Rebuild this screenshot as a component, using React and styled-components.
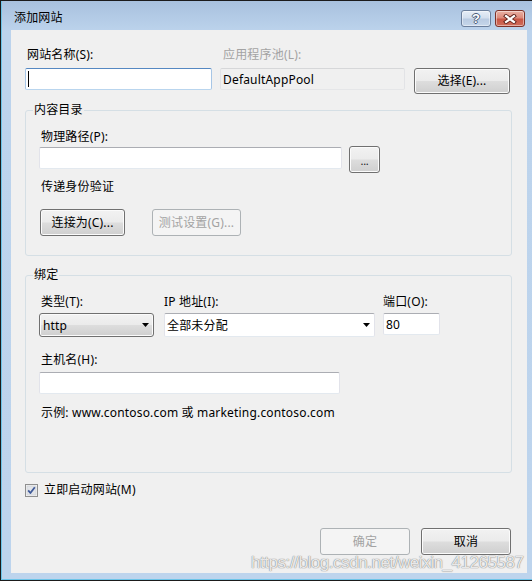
import React from "react";
import styled, { createGlobalStyle } from "styled-components";

const GlobalStyle = createGlobalStyle`
  html, body { margin: 0; padding: 0; background: #000; }
  body {
    font-family: "Noto Sans", "Noto Sans CJK SC", sans-serif;
    font-size: 12px;
    letter-spacing: 0.18px;
    color: #000;
  }
  * { box-sizing: border-box; }
`;

const Window = styled.div`
  position: relative;
  width: 532px;
  height: 581px;
  overflow: hidden;
  display: flex;
  flex-direction: column;
  border-top: 1px solid #1b1b1b;
  border-left: 1px solid #1b1b1b;
  border-bottom: 1px solid #1b1b1b;
  background: linear-gradient(#a8c1de 0px, #bcd3ec 30px, #bdd4ed 100%);
  box-shadow: inset 1px 0 0 #6cc4e8, inset 0 -1px 0 #6cc4e8;
`;

const TitleBar = styled.div`
  height: 29px;
  flex: none;
  display: flex;
  align-items: flex-start;
  padding: 9px 7px 0 13px;
`;

const Title = styled.div`
  line-height: 16px;
  flex: 1;
`;

const CaptionButton = styled.div`
  width: 30px;
  height: 17px;
  margin-left: ${(p) => p.$gap ?? 0}px;
  display: flex;
  align-items: center;
  justify-content: center;
  border-radius: 3px;
  border: 1px solid ${(p) => (p.$close ? "#7d3229" : "#6b7f9c")};
  background: ${(p) =>
    p.$close
      ? "linear-gradient(#eab1a4 0%, #dc8a7b 45%, #c95645 55%, #cf6e5c 100%)"
      : "linear-gradient(#e6eef7 0%, #d3dfee 45%, #b9cbe2 55%, #c6d7ea 100%)"};
  box-shadow: inset 0 0 0 1px rgba(255, 255, 255, 0.45);
`;

const HelpGlyph = styled.span`
  font-family: "Liberation Sans", sans-serif;
  font-weight: bold;
  font-size: 13px;
  line-height: 13px;
  color: #fff;
  text-shadow: 1px 0 0 #4a5c78, -1px 0 0 #4a5c78, 0 1px 0 #4a5c78,
    0 -1px 0 #4a5c78;
`;

const Client = styled.div`
  flex: 1;
  margin: 0 5px 7px 10px;
  background: #f0f0f0;
  padding: 17px 15px 0 14px;
  display: flex;
  flex-direction: column;
`;

const Row = styled.div`
  display: flex;
  align-items: flex-start;
  gap: ${(p) => p.$gap ?? 0}px;
  margin-top: ${(p) => p.$mt ?? 0}px;
  margin-left: ${(p) => p.$ml ?? 0}px;
`;

const Column = styled.div`
  display: flex;
  flex-direction: column;
  width: ${(p) => p.$w}px;
  margin-left: ${(p) => p.$ml ?? 0}px;
`;

const Label = styled.div`
  line-height: 16px;
  white-space: nowrap;
  padding-left: ${(p) => p.$indent ?? 2}px;
  margin-top: ${(p) => p.$mt ?? 0}px;
  margin-bottom: ${(p) => p.$mb ?? 0}px;
  color: ${(p) => (p.$disabled ? "#a3a3a3" : "#000")};
`;

const TextBox = styled.div`
  display: flex;
  align-items: center;
  flex: none;
  width: ${(p) => p.$w}px;
  height: ${(p) => p.$h ?? 22}px;
  margin-top: ${(p) => p.$mt ?? 0}px;
  padding: 0 3px 0 ${(p) => p.$pl ?? 2}px;
  background: ${(p) => (p.$readOnly ? "#f0f0f0" : "#fff")};
  border: 1px solid;
  border-color: ${(p) =>
    p.$focused
      ? "#5588c2 #a7c6e6 #b9d5ee #a7c6e6"
      : p.$readOnly
      ? "#d6d7d9 #e2e3e6 #e5e6e8 #e2e3e6"
      : "#abadb3 #e2e3ea #e3e9ef #e2e3ea"};
  border-radius: 2px;
  white-space: nowrap;
`;

const Caret = styled.span`
  width: 1px;
  height: 16px;
  background: #000;
`;

const Button = styled.button`
  flex: none;
  width: ${(p) => p.$w}px;
  height: ${(p) => p.$h ?? 27}px;
  padding: 0;
  margin: 0;
  font: inherit;
  letter-spacing: inherit;
  color: #000;
  line-height: 16px;
  border: 1px solid #707070;
  border-radius: 3px;
  background: linear-gradient(#f2f2f2 0%, #ebebeb 48%, #dddddd 52%, #cfcfcf 100%);
  box-shadow: inset 0 0 0 1px #fbfbfb;
  &:disabled {
    border-color: #adb2b5;
    background: #f4f4f4;
    color: #a3a3a3;
    box-shadow: none;
  }
`;

const Dots = styled.span`
  display: inline-block;
  font-size: 11px;
  letter-spacing: -0.3px;
  color: #1a1a1a;
  transform: translateY(1px);
`;

const ComboButton = styled.div`
  display: flex;
  align-items: center;
  width: ${(p) => p.$w}px;
  height: 24px;
  padding: 0 4px 0 3px;
  border: 1px solid #707070;
  border-radius: 3px;
  background: linear-gradient(#f2f2f2 0%, #ebebeb 48%, #dddddd 52%, #cfcfcf 100%);
  box-shadow: inset 0 0 0 1px #fbfbfb;
`;

const ComboField = styled.div`
  display: flex;
  align-items: center;
  width: ${(p) => p.$w}px;
  height: 24px;
  padding: 0 4px 0 2px;
  background: #fff;
  border: 1px solid;
  border-color: #abadb3 #e2e3ea #e3e9ef #e2e3ea;
  border-radius: 2px;
`;

const ComboText = styled.span`
  flex: 1;
  white-space: nowrap;
`;

const Group = styled.fieldset`
  margin: ${(p) => p.$mt ?? 0}px 0 0 0;
  padding: ${(p) => p.$pt}px 0 ${(p) => p.$pb}px 0;
  border: 1px solid #d5dfe5;
  border-radius: 3px;
  min-width: 0;
`;

const Legend = styled.legend`
  margin-left: 7px;
  padding: 0 1px;
  line-height: 16px;
`;

const GroupBody = styled.div`
  display: flex;
  flex-direction: column;
  padding: 0 13px;
`;

const CheckRow = styled.label`
  display: flex;
  align-items: center;
  gap: 6px;
  height: 16px;
  margin-top: 9px;
  line-height: 16px;
`;

const Footer = styled.div`
  display: flex;
  justify-content: flex-end;
  gap: 11px;
  margin: 30px 1px 0 0;
`;

const Watermark = styled.div`
  position: absolute;
  left: 250px;
  top: 552px;
  font-family: "Liberation Sans", sans-serif;
  font-size: 17px;
  letter-spacing: -0.45px;
  line-height: 20px;
  color: rgba(248, 248, 248, 0.9);
  text-shadow: 0 0 1px rgba(110, 110, 110, 0.9), 0 0 1px rgba(110, 110, 110, 0.6);
  white-space: nowrap;
  pointer-events: none;
`;

const DropArrow = () => (
  <svg width="7" height="4" viewBox="0 0 7 4">
    <polygon points="0,0 7,0 3.5,4" fill="#000" />
  </svg>
);

const CloseGlyph = () => (
  <svg width="14" height="10" viewBox="0 0 14 10">
    <g strokeLinecap="square">
      <path d="M3 2 L11 8 M11 2 L3 8" stroke="#5d2019" strokeWidth="4" />
      <path d="M3 2 L11 8 M11 2 L3 8" stroke="#fff" strokeWidth="2.2" />
    </g>
  </svg>
);

const CheckBox = () => (
  <svg width="13" height="13" viewBox="0 0 13 13">
    <rect x="0.5" y="0.5" width="12" height="12" fill="#f4f4f4" stroke="#8f8f8f" />
    <rect x="2" y="2" width="9" height="9" fill="#e2e4e8" stroke="#c9ccd2" strokeWidth="0.6" />
    <path
      d="M3.2 6.4 L5.4 9 L9.8 3.2"
      fill="none"
      stroke="#3f5a99"
      strokeWidth="1.8"
      strokeLinejoin="round"
    />
  </svg>
);

export default function App() {
  return (
    <>
      <GlobalStyle />
      <Window>
        <TitleBar>
          <Title>添加网站</Title>
          <CaptionButton>
            <HelpGlyph>?</HelpGlyph>
          </CaptionButton>
          <CaptionButton $close $gap={4}>
            <CloseGlyph />
          </CaptionButton>
        </TitleBar>

        <Client>
          <Row>
            <Column $w={187}>
              <Label $mb={5}>网站名称(S):</Label>
              <TextBox $w={187} $focused>
                <Caret />
              </TextBox>
            </Column>
            <Column $w={185} $ml={8}>
              <Label $mb={5} $indent={3} $disabled>
                应用程序池(L):
              </Label>
              <TextBox $w={185} $readOnly>
                DefaultAppPool
              </TextBox>
            </Column>
            <Column $w={96} $ml={9}>
              <Label $mb={5}>&nbsp;</Label>
              <Button $w={96} $h={26}>
                选择(E)...
              </Button>
            </Column>
          </Row>

          <Group $mt={8} $pt={11} $pb={19}>
            <Legend>内容目录</Legend>
            <GroupBody>
              <Label $mb={1}>物理路径(P):</Label>
              <Row $gap={7}>
                <TextBox $w={303} $mt={1} />
                <Button $w={31}>
                  <Dots>...</Dots>
                </Button>
              </Row>
              <Label $mt={6}>传递身份验证</Label>
              <Row $gap={27} $mt={14} $ml={1}>
                <Button $w={85}>连接为(C)...</Button>
                <Button $w={89} disabled>
                  测试设置(G)...
                </Button>
              </Row>
            </GroupBody>
          </Group>

          <Group $mt={11} $pt={11} $pb={51}>
            <Legend>绑定</Legend>
            <GroupBody>
              <Row>
                <Column $w={115}>
                  <Label $mb={3}>类型(T):</Label>
                  <ComboButton $w={115}>
                    <ComboText>http</ComboText>
                    <DropArrow />
                  </ComboButton>
                </Column>
                <Column $w={211} $ml={10}>
                  <Label $mb={3} $indent={-2}>
                    IP 地址(I):
                  </Label>
                  <ComboField $w={211}>
                    <ComboText>全部未分配</ComboText>
                    <DropArrow />
                  </ComboField>
                </Column>
                <Column $w={57} $ml={8}>
                  <Label $mb={3} $indent={-1}>
                    端口(O):
                  </Label>
                  <TextBox $w={57} $pl={2}>
                    80
                  </TextBox>
                </Column>
              </Row>
              <Label $mt={15} $mb={4}>
                主机名(H):
              </Label>
              <TextBox $w={301} />
              <Label $mt={11}>示例: www.contoso.com 或 marketing.contoso.com</Label>
            </GroupBody>
          </Group>

          <CheckRow>
            <CheckBox />
            立即启动网站(M)
          </CheckRow>

          <Footer>
            <Button $w={90} disabled>
              确定
            </Button>
            <Button $w={90}>取消</Button>
          </Footer>
        </Client>

        <Watermark>https://blog.csdn.net/weixin_41265587</Watermark>
      </Window>
    </>
  );
}
